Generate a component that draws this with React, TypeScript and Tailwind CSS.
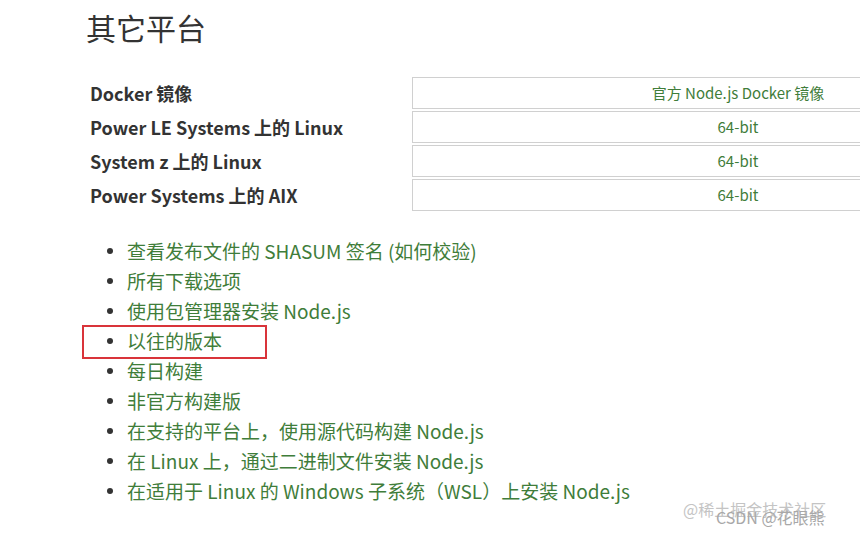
import React from "react";

const font = { fontFamily: '"Noto Sans CJK SC", "Noto Sans", sans-serif' };

const rows: [string, string][] = [
  ["Docker 镜像", "官方 Node.js Docker 镜像"],
  ["Power LE Systems 上的 Linux", "64-bit"],
  ["System z 上的 Linux", "64-bit"],
  ["Power Systems 上的 AIX", "64-bit"],
];

const items = [
  "查看发布文件的 SHASUM 签名 (如何校验)",
  "所有下载选项",
  "使用包管理器安装 Node.js",
  "以往的版本",
  "每日构建",
  "非官方构建版",
  "在支持的平台上，使用源代码构建 Node.js",
  "在 Linux 上，通过二进制文件安装 Node.js",
  "在适用于 Linux 的 Windows 子系统（WSL）上安装 Node.js",
];

export default function App() {
  return (
    <div
      className="relative w-[860px] h-[537px] overflow-hidden bg-white text-[#333]"
      style={font}
    >
      <div className="pl-[86px] pt-[8px]">
        <h2 className="text-[30px] leading-[38px] font-normal text-[#333]">其它平台</h2>
      </div>
      <div className="mt-[31px] ml-[90px] flex flex-col gap-[2px]">
        {rows.map(([a, c], i) => (
          <div key={i} className="flex h-[32px] items-center">
            <div className="w-[322px] shrink-0 text-[18px] font-semibold leading-[32px] whitespace-nowrap text-[#333]">
              {a}
            </div>
            <div className="w-[652px] h-[32px] shrink-0 border border-[#d0d0d0] flex items-center justify-center text-[15px] text-[#3f7d3a] whitespace-nowrap">
              {c}
            </div>
          </div>
        ))}
      </div>
      <ul className="mt-[25px] ml-[107px] flex flex-col">
        {items.map((t, i) => (
          <li key={i} className="relative flex items-center h-[30px] text-[19px] leading-[30px] text-[#3f7d3a] whitespace-nowrap">
            <span className="w-[6px] h-[6px] shrink-0 rounded-full bg-[#333] mr-[14px]" />
            <span>{t}</span>
            {i === 3 && (
              <span className="absolute left-[-25px] top-[-1px] w-[185px] h-[34px] border-2 border-[#d9343a]" />
            )}
          </li>
        ))}
      </ul>
      <div className="absolute left-[683px] top-[499px] text-[16px] leading-[20px] text-[#c4c4c4] whitespace-nowrap">
        @稀土掘金技术社区
      </div>
      <div className="absolute left-[716px] top-[507px] text-[16px] leading-[20px] text-[#a8a8a8] whitespace-nowrap">
        CSDN @花眼熊
      </div>
    </div>
  );
}
